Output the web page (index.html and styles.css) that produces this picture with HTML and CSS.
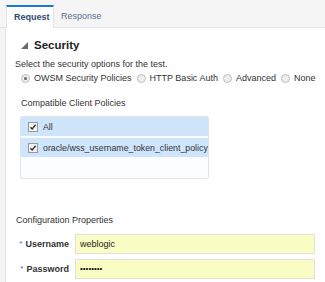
FILE: index.html
```html
<!DOCTYPE html>
<html>
<head>
<meta charset="utf-8">
<link rel="stylesheet" href="styles.css">
</head>
<body>
<div class="tabs">
  <div class="tab active">Request</div>
  <div class="tab">Response</div>
</div>
<div class="body">
  <div class="side"></div>
  <div class="content">
    <div class="section"><span class="tri"></span><span class="title">Security</span></div>
    <div class="hint">Select the security options for the test.</div>
    <div class="radios">
      <label class="radio"><span class="dot on"></span>OWSM Security Policies</label>
      <label class="radio"><span class="dot"></span>HTTP Basic Auth</label>
      <label class="radio"><span class="dot"></span>Advanced</label>
      <label class="radio"><span class="dot"></span>None</label>
    </div>
    <div class="sub">Compatible Client Policies</div>
    <div class="list">
      <div class="row sel"><span class="cb"><svg viewBox="0 0 8 8" width="8" height="8"><path d="M1.5 4.2 L3.2 6 L6.6 1.8" fill="none" stroke="#333" stroke-width="1.4"/></svg></span>All</div>
      <div class="row sel"><span class="cb"><svg viewBox="0 0 8 8" width="8" height="8"><path d="M1.5 4.2 L3.2 6 L6.6 1.8" fill="none" stroke="#333" stroke-width="1.4"/></svg></span>oracle/wss_username_token_client_policy</div>
      <div class="row empty"></div>
    </div>
    <div class="config">Configuration Properties</div>
    <div class="form">
      <div class="lbl"><span class="req">*</span>Username</div>
      <div class="input">weblogic</div>
      <div class="lbl"><span class="req">*</span>Password</div>
      <div class="input pw">••••••••</div>
    </div>
  </div>
</div>
</body>
</html>
```

FILE: styles.css
```css
html, body {
  margin: 0;
  padding: 0;
  background: #fff;
}
body {
  width: 325px;
  height: 282px;
  overflow: hidden;
  font-family: "Liberation Sans", Arial, sans-serif;
  font-size: 9px;
  color: #333;
}
.tabs {
  height: 27px;
  background: #f5f5f5;
  border-bottom: 1px solid #dfe5ea;
  display: flex;
  align-items: flex-end;
  padding-left: 6px;
}
.tab {
  height: 22px;
  line-height: 21px;
  padding: 0 6px 0 7px;
  font-size: 9px;
  color: #5b6f98;
  margin-bottom: -1px;
}
.tab.active {
  background: #fff;
  border-top: 2px solid #1c7ad4;
  border-left: 1px solid #e3e3e3;
  border-right: 1px solid #e3e3e3;
  height: 21px;
  color: #2f4a6e;
  font-weight: bold;
  width: 33px;
}
.body {
  display: flex;
  height: 254px;
}
.side {
  width: 5px;
  background: #f3f3f3;
  border-right: 1px solid #e6e6e6;
}
.content {
  flex: 1;
  padding: 9px 0 0 9px;
}
.section {
  display: flex;
  align-items: center;
  height: 16px;
  padding-left: 6px;
}
.tri {
  width: 0;
  height: 0;
  border-left: 7px solid transparent;
  border-bottom: 7px solid #6b6b6b;
  margin-right: 6px;
}
.title {
  font-weight: bold;
  font-size: 11.5px;
  color: #222;
}
.hint {
  margin-top: 5px;
  height: 12px;
  line-height: 12px;
}
.radios {
  display: flex;
  align-items: center;
  margin-top: 1px;
  padding-left: 6px;
  height: 14px;
  white-space: nowrap;
}
.radio {
  display: flex;
  align-items: center;
  margin-right: 5px;
}
.dot {
  flex: none;
  width: 7px;
  height: 7px;
  border: 1px solid #bdbdbd;
  border-radius: 50%;
  background: #efefef;
  margin-right: 4px;
  position: relative;
}
.dot.on::after {
  content: "";
  position: absolute;
  left: 2px;
  top: 2px;
  width: 3px;
  height: 3px;
  border-radius: 50%;
  background: #666;
}
.sub {
  margin-top: 12px;
  padding-left: 6px;
  height: 12px;
  line-height: 12px;
  color: #333;
}
.list {
  margin-top: 7px;
  margin-left: 5px;
  width: 187px;
  height: 61px;
  border: 1px solid #e1e5ea;
  border-radius: 2px;
  background: #fbfdff;
  display: flex;
  flex-direction: column;
  gap: 2px;
  font-size: 8.8px;
}
.row {
  height: 19px;
  display: flex;
  align-items: center;
  padding-left: 7px;
}
.row.sel {
  background: #cfe5fb;
}
.row.empty {
  flex: 1;
}
.cb {
  width: 8px;
  height: 8px;
  border: 1px solid #999;
  background: #f2f2f2;
  margin-right: 5px;
  display: flex;
}
.config {
  margin-top: 35px;
  padding-left: 1px;
  height: 12px;
  line-height: 12px;
}
.form {
  margin-top: 8px;
  display: grid;
  grid-template-columns: 60px 240px;
  row-gap: 5px;
  align-items: center;
}
.lbl {
  text-align: right;
  padding-right: 6px;
  font-weight: bold;
  color: #333;
}
.req {
  color: #2a74c8;
  font-weight: normal;
  vertical-align: top;
  font-size: 8px;
  margin-right: 3px;
}
.input {
  height: 18px;
  line-height: 18px;
  background: #f9fcc3;
  border: 1px solid #e2e2dc;
  padding-left: 4px;
  color: #222;
}
.input.pw {
  font-size: 8px;
  color: #111;
}
```
